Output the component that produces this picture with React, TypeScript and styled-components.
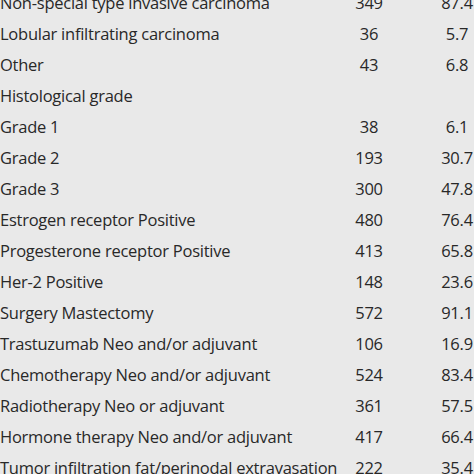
import React from 'react';
import { styled, createGlobalStyle } from 'styled-components';

const rows: [string, string, string][] = [
  ['Non-special type invasive carcinoma', '349', '87.4'],
  ['Lobular infiltrating carcinoma', '36', '5.7'],
  ['Other', '43', '6.8'],
  ['Histological grade', '', ''],
  ['Grade 1', '38', '6.1'],
  ['Grade 2', '193', '30.7'],
  ['Grade 3', '300', '47.8'],
  ['Estrogen receptor Positive', '480', '76.4'],
  ['Progesterone receptor Positive', '413', '65.8'],
  ['Her-2 Positive', '148', '23.6'],
  ['Surgery Mastectomy', '572', '91.1'],
  ['Trastuzumab Neo and/or adjuvant', '106', '16.9'],
  ['Chemotherapy Neo and/or adjuvant', '524', '83.4'],
  ['Radiotherapy Neo or adjuvant', '361', '57.5'],
  ['Hormone therapy Neo and/or adjuvant', '417', '66.4'],
  ['Tumor infiltration fat/perinodal extravasation', '222', '35.4'],
];

const GlobalStyle = createGlobalStyle`
  html, body {
    margin: 0;
    padding: 0;
    background: #e9e9e9;
    overflow: hidden;
  }
`;

const Page = styled.div`
  width: 474px;
  height: 474px;
  overflow: hidden;
  background: #e9e9e9;
`;

// the table is cropped on the top and right, as in the screenshot
const Table = styled.div`
  display: grid;
  grid-template-columns: 330px 78px 98px;
  grid-auto-rows: 31px;
  width: 506px;
  margin-top: -13.5px;
  font-family: 'Open Sans', sans-serif;
  font-size: 16.5px;
  letter-spacing: -0.25px;
  color: #282828;
`;

const Cell = styled.div<{ $center?: boolean }>`
  display: flex;
  align-items: center;
  justify-content: ${(p) => (p.$center ? 'center' : 'flex-start')};
  white-space: nowrap;
`;

const App: React.FC = () => (
  <Page>
    <GlobalStyle />
    <Table>
      {rows.map(([label, n, pct]) => (
        <React.Fragment key={label}>
          <Cell>{label}</Cell>
          <Cell $center>{n}</Cell>
          <Cell $center>{pct}</Cell>
        </React.Fragment>
      ))}
    </Table>
  </Page>
);

export default App;
